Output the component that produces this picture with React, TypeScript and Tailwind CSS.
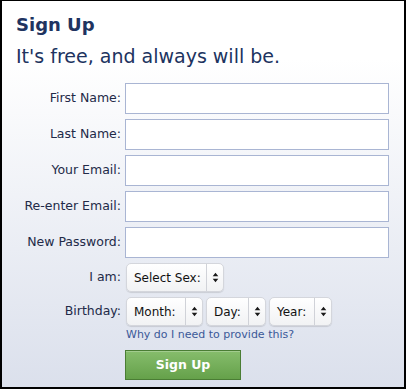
import React from "react";

const labelCls =
  "w-[123px] shrink-0 pr-[4px] text-right text-[12.5px] leading-none text-[#222a48]";

function Arrows() {
  return (
    <svg width="7" height="11" viewBox="0 0 7 11">
      <path d="M3.5 0.8 L6.3 4.3 H0.7Z M3.5 10.2 L6.3 6.7 H0.7Z" fill="#1a1a1a" />
    </svg>
  );
}

function FakeSelect({ text, w }: { text: string; w: string }) {
  return (
    <div
      className={`${w} flex h-[29px] items-stretch rounded-[5px] border border-[#d4d6dc] bg-linear-to-b from-white to-[#f1f2f4] shadow-[0_1px_1px_rgba(0,0,0,0.12)]`}
    >
      <span className="flex flex-1 items-center pl-[7px] text-[12px] text-[#111]">{text}</span>
      <span className="flex w-[17px] items-center justify-center border-l border-[#d0d2d8]">
        <Arrows />
      </span>
    </div>
  );
}

function Field({ label }: { label: string }) {
  return (
    <div className="flex h-[31px] items-center">
      <label className={labelCls}>{label}</label>
      <input className="h-[31px] w-[264px] border border-[#a9b5d3] bg-white outline-none" />
    </div>
  );
}

export default function App() {
  return (
    <div className="h-[389px] w-[406px] border-t border-r-2 border-b-2 border-l-2 border-black bg-linear-to-b from-white from-[15%] to-[#dbe0ec] font-['DejaVu_Sans',sans-serif]">
      {/* heading */}
      <div className="pl-[14px] pt-[13px] text-[#203360]">
        <h1 className="text-[18px] font-bold leading-[22px]">Sign Up</h1>
        <p className="mt-[8px] text-[19px] leading-[24px]">It's free, and always will be.</p>
      </div>

      {/* form rows */}
      <div className="mt-[15px] flex flex-col gap-[5px]">
        <Field label="First Name:" />
        <Field label="Last Name:" />
        <Field label="Your Email:" />
        <Field label="Re-enter Email:" />
        <Field label="New Password:" />

        <div className="flex h-[29px] items-center">
          <label className={labelCls}>I am:</label>
          <div className="pl-[1px]">
            <FakeSelect text="Select Sex:" w="w-[98px]" />
          </div>
        </div>

        <div className="flex h-[29px] items-center">
          <label className={labelCls}>Birthday:</label>
          <div className="flex gap-[3px] pl-[1px]">
            <FakeSelect text="Month:" w="w-[77px]" />
            <FakeSelect text="Day:" w="w-[60px]" />
            <FakeSelect text="Year:" w="w-[63px]" />
          </div>
        </div>
      </div>

      <div className="ml-[123px] mt-[2px]">
        <a className="block pl-[1px] text-[11px] leading-[14px] text-[#3b5998]">
          Why do I need to provide this?
        </a>
        <button className="mt-[8px] h-[30px] w-[116px] border border-[#4a7d34] bg-linear-to-b from-[#86bd6c] to-[#65a14a] text-[12.5px] font-bold text-white shadow-[inset_0_1px_0_#a2cc8e]">
          Sign Up
        </button>
      </div>
    </div>
  );
}
